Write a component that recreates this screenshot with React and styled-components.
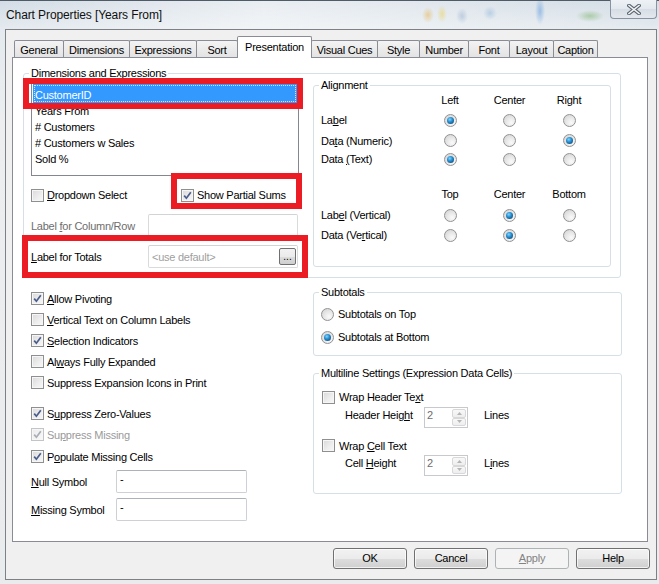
import React from 'react'
import styled, { createGlobalStyle } from 'styled-components'

const GlobalStyle = createGlobalStyle`
  html, body { margin: 0; padding: 0; }
  body {
    font-family: "Liberation Sans", Arial, sans-serif;
    font-size: 11px;
    letter-spacing: -0.25px;
    color: #000;
  }
  u { text-underline-offset: 1px; }
`

const tabs = [
  ['General', 50], ['Dimensions', 67], ['Expressions', 68], ['Sort', 42],
  ['Presentation', 75], ['Visual Cues', 67], ['Style', 43], ['Number', 50],
  ['Font', 42], ['Layout', 45], ['Caption', 45],
]

const listItems = ['CustomerID', 'Years From', '# Customers', '# Customers w Sales', 'Sold %']

function Check({ checked, disabled }) {
    return (
        <CheckBox $disabled={disabled}>
            {checked &&
                <svg width="11" height="11" viewBox="0 0 11 11">
                    <path d="M2.2 5.6 L4.4 8.2 L8.8 2.2" fill="none"
                        stroke={disabled ? '#a9adb5' : '#4b5d8c'} strokeWidth="1.7" />
                </svg>
            }
        </CheckBox>
    )
}

function Spinner() {
    return (
        <Spin>
            <SpinText>2</SpinText>
            <SpinButtons>
                <SpinBtn>
                    <svg width="5" height="3" viewBox="0 0 5 3"><path d="M0 3 L2.5 0 L5 3Z" fill="#b5b5b5" /></svg>
                </SpinBtn>
                <SpinBtn>
                    <svg width="5" height="3" viewBox="0 0 5 3"><path d="M0 0 L2.5 3 L5 0Z" fill="#b5b5b5" /></svg>
                </SpinBtn>
            </SpinButtons>
        </Spin>
    )
}

function App() {
    return (
        <>
            <GlobalStyle />
            <Window>
                <TitleBar>
                    <Title>Chart Properties [Years From]</Title>
                    <CloseButton>
                        <svg width="14" height="11" viewBox="0 0 14 11">
                            <path d="M2 1.5 L12 9.5 M12 1.5 L2 9.5" stroke="#5d6670" strokeWidth="3.6" strokeLinecap="square" />
                            <path d="M2 1.5 L12 9.5 M12 1.5 L2 9.5" stroke="#f4f6f8" strokeWidth="1.6" strokeLinecap="square" />
                        </svg>
                    </CloseButton>
                </TitleBar>

                <Client>
                    <TabStrip>
                        {tabs.map(([name, w], i) => (
                            <Tab key={name} $w={w} $first={i === 0} $active={name === 'Presentation'}>{name}</Tab>
                        ))}
                    </TabStrip>

                    <Panel>
                        <TopGroup>
                            <Legend>Dimensions and Expressions</Legend>
                            <TopLeft>
                                <ListBox>
                                    {listItems.map((item, i) => (
                                        <ListItem key={item} $selected={i === 0}>{item}</ListItem>
                                    ))}
                                </ListBox>
                                <CheckLine>
                                    <CheckItem $w={150}><Check /><span><u>D</u>ropdown Select</span></CheckItem>
                                    <CheckItem><Check checked /><span>Show Partial Sums</span></CheckItem>
                                </CheckLine>
                                <FieldRow $top={12}>
                                    <FieldLabel $w={117} $disabled>Label <u>f</u>or Column/Row</FieldLabel>
                                    <TextBox $w={150} $disabled />
                                </FieldRow>
                                <FieldRow $top={8}>
                                    <FieldLabel $w={117}><u>L</u>abel for Totals</FieldLabel>
                                    <TextBox $w={150} $disabled>
                                        <Placeholder>&lt;use default&gt;</Placeholder>
                                        <DotsButton>...</DotsButton>
                                    </TextBox>
                                </FieldRow>
                            </TopLeft>

                            <AlignGroup>
                                <Legend>Alignment</Legend>
                                <AlignGrid>
                                    <span />
                                    <ColHead>Left</ColHead>
                                    <ColHead>Center</ColHead>
                                    <ColHead>Right</ColHead>

                                    <RowHead>La<u>b</u>el</RowHead>
                                    <Cell><Radio $on /></Cell><Cell><Radio /></Cell><Cell><Radio /></Cell>
                                    <RowHead>Da<u>t</u>a (Numeric)</RowHead>
                                    <Cell><Radio /></Cell><Cell><Radio /></Cell><Cell><Radio $on /></Cell>
                                    <RowHead>Data <u>(</u>Text)</RowHead>
                                    <Cell><Radio $on /></Cell><Cell><Radio /></Cell><Cell><Radio /></Cell>

                                    <Spacer />

                                    <span />
                                    <ColHead>Top</ColHead>
                                    <ColHead>Center</ColHead>
                                    <ColHead>Bottom</ColHead>

                                    <RowHead>Lab<u>e</u>l (Vertical)</RowHead>
                                    <Cell><Radio /></Cell><Cell><Radio $on /></Cell><Cell><Radio /></Cell>
                                    <RowHead>Data (Ve<u>r</u>tical)</RowHead>
                                    <Cell><Radio /></Cell><Cell><Radio $on /></Cell><Cell><Radio /></Cell>
                                </AlignGrid>
                            </AlignGroup>
                        </TopGroup>

                        <Lower>
                            <OptionCol>
                                <OptionBlock $top={10}>
                                    <OptionRow><Check checked /><span><u>A</u>llow Pivoting</span></OptionRow>
                                    <OptionRow><Check /><span><u>V</u>ertical Text on Column Labels</span></OptionRow>
                                    <OptionRow><Check checked /><span><u>S</u>election Indicators</span></OptionRow>
                                    <OptionRow><Check /><span>Al<u>w</u>ays Fully Expanded</span></OptionRow>
                                    <OptionRow><Check /><span>Suppress Expansion Icons in Print</span></OptionRow>
                                </OptionBlock>
                                <OptionBlock $top={10}>
                                    <OptionRow><Check checked /><span>S<u>u</u>ppress Zero-Values</span></OptionRow>
                                    <OptionRow $disabled><Check checked disabled /><span>Su<u>p</u>press Missing</span></OptionRow>
                                    <OptionRow $top={1}><Check checked /><span>P<u>o</u>pulate Missing Cells</span></OptionRow>
                                </OptionBlock>
                                <FieldRow $top={3}>
                                    <FieldLabel $w={85}><u>N</u>ull Symbol</FieldLabel>
                                    <TextBox $w={131}><InputText>-</InputText></TextBox>
                                </FieldRow>
                                <FieldRow $top={5}>
                                    <FieldLabel $w={85}><u>M</u>issing Symbol</FieldLabel>
                                    <TextBox $w={131}><InputText>-</InputText></TextBox>
                                </FieldRow>
                            </OptionCol>

                            <SideCol>
                                <Group $h={64} $top={14}>
                                    <Legend>Subtotals</Legend>
                                    <GroupBody $pt={11} $pl={7}>
                                        <RadioRow><Radio /><span>Subtotals on Top</span></RadioRow>
                                        <RadioRow $top={3}><Radio $on /><span>Subtotals at Bottom</span></RadioRow>
                                    </GroupBody>
                                </Group>
                                <Group $h={121} $top={17}>
                                    <Legend>Multiline Settings (Expression Data Cells)</Legend>
                                    <GroupBody $pt={13} $pl={8}>
                                        <RadioRow><Check /><span>Wrap Header Te<u>x</u>t</span></RadioRow>
                                        <SpinRow>
                                            <SpinLabel>Header Heig<u>h</u>t</SpinLabel>
                                            <Spinner />
                                            <SpinUnit>Lines</SpinUnit>
                                        </SpinRow>
                                        <RadioRow $top={9} $h={19}><Check /><span>Wrap <u>C</u>ell Text</span></RadioRow>
                                        <SpinRow>
                                            <SpinLabel>Cell <u>H</u>eight</SpinLabel>
                                            <Spinner />
                                            <SpinUnit>L<u>i</u>nes</SpinUnit>
                                        </SpinRow>
                                    </GroupBody>
                                </Group>
                            </SideCol>
                        </Lower>
                    </Panel>

                    <ButtonBar>
                        <Button>OK</Button>
                        <Button>Cancel</Button>
                        <Button $disabled><u>A</u>pply</Button>
                        <Button>Help</Button>
                    </ButtonBar>
                </Client>

                <Marker $x={23} $y={78} $w={280} $h={31} />
                <Marker $x={171} $y={173} $w={131} $h={36} />
                <Marker $x={22} $y={235} $w={286} $h={43} />
            </Window>
        </>
    )
}

const Window = styled.div`
    position: relative;
    width: 659px;
    height: 584px;
    overflow: hidden;
    background: linear-gradient(180deg, #d3dce5 0px, #e4eaef 28px, #eceef0 120px, #e9ebed 100%);
`

const TitleBar = styled.div`
    height: 28px;
    border-top: 1px solid #4f5b67;
    display: flex;
    justify-content: space-between;
    align-items: flex-start;
    background:
        radial-gradient(ellipse 6px 8px at 428px 14px, rgba(230, 170, 60, 0.45), transparent),
        radial-gradient(ellipse 5px 9px at 442px 13px, rgba(235, 205, 70, 0.45), transparent),
        radial-gradient(ellipse 6px 8px at 462px 15px, rgba(120, 150, 190, 0.35), transparent),
        radial-gradient(ellipse 7px 7px at 490px 12px, rgba(110, 160, 210, 0.35), transparent),
        radial-gradient(ellipse 5px 14px at 540px 10px, rgba(70, 140, 220, 0.45), transparent),
        radial-gradient(ellipse 14px 6px at 590px 15px, rgba(110, 170, 90, 0.45), transparent),
        linear-gradient(90deg, rgba(255,255,255,0) 0%, rgba(255,255,255,0.5) 40%, rgba(255,255,255,0) 100%);
`

const Title = styled.div`
    padding: 7px 0 0 6px;
    font-size: 12px;
    line-height: 14px;
    letter-spacing: -0.1px;
    color: #111;
`

const CloseButton = styled.div`
    box-sizing: border-box;
    width: 47px;
    height: 19px;
    margin: -1px 2px 0 0;
    border: 1px solid #8793a0;
    border-top: none;
    border-radius: 0 0 4px 4px;
    background: linear-gradient(180deg, #eef2f6 0%, #e2e8ee 50%, #d6dde4 51%, #e3e8ee 100%);
    display: flex;
    align-items: center;
    justify-content: center;
`

const Client = styled.div`
    box-sizing: border-box;
    margin-left: 5px;
    width: 652px;
    height: 551px;
    border: 1px solid #7d8084;
    background: #f0f0f0;
`

const TabStrip = styled.div`
    position: relative;
    z-index: 2;
    display: flex;
    align-items: flex-end;
    height: 21px;
    margin-top: 6px;
    padding-left: 8px;
`

const Tab = styled.div`
    box-sizing: border-box;
    width: ${p => p.$w}px;
    height: ${p => (p.$active ? 22 : 17)}px;
    margin-left: ${p => (p.$first ? 0 : -1)}px;
    margin-bottom: ${p => (p.$active ? -1 : 0)}px;
    padding-top: ${p => (p.$active ? 3 : 2)}px;
    border: 1px solid #898c95;
    border-bottom: none;
    border-radius: 2px 2px 0 0;
    background: ${p => (p.$active ? '#fff' : 'linear-gradient(180deg, #f3f3f3 0%, #ebebeb 50%, #e3e3e3 100%)')};
    position: relative;
    z-index: ${p => (p.$active ? 2 : 1)};
    text-align: center;
    line-height: 14px;
    white-space: nowrap;
`

const Panel = styled.div`
    box-sizing: border-box;
    margin-left: 6px;
    width: 636px;
    height: 485px;
    border: 1px solid #898c95;
    background: #fff;
`

const Legend = styled.div`
    position: absolute;
    top: -8px;
    left: 5px;
    padding: 0 2px;
    background: #fff;
    line-height: 14px;
    white-space: nowrap;
`

const TopGroup = styled.div`
    position: relative;
    box-sizing: border-box;
    margin: 15px 0 0 10px;
    width: 598px;
    height: 205px;
    border: 1px solid #d5dfe5;
    border-radius: 3px;
    display: flex;
`

const TopLeft = styled.div`
    width: 289px;
    box-sizing: border-box;
    padding: 8px 0 0 7px;
`

const ListBox = styled.div`
    box-sizing: border-box;
    width: 268px;
    height: 94px;
    border: 1px solid #828790;
    padding: 1px 1px 0;
`

const ListItem = styled.div`
    box-sizing: border-box;
    height: ${p => (p.$selected ? 19 : 16)}px;
    padding: ${p => (p.$selected ? '3px 0 0 2px' : '0 0 0 2px')};
    line-height: 16px;
    white-space: nowrap;
    background: ${p => (p.$selected ? '#3399ff' : 'transparent')};
    color: ${p => (p.$selected ? '#fff' : '#000')};
    outline: ${p => (p.$selected ? '1px dotted #cfe6ff' : 'none')};
    outline-offset: -2px;
`

const CheckLine = styled.div`
    display: flex;
    align-items: center;
    margin-top: 12px;
    height: 14px;
`

const CheckItem = styled.div`
    display: flex;
    align-items: center;
    gap: 3px;
    width: ${p => (p.$w ? `${p.$w}px` : 'auto')};
    white-space: nowrap;
`

const CheckBox = styled.span`
    box-sizing: border-box;
    flex: none;
    width: 13px;
    height: 13px;
    border: 1px solid ${p => (p.$disabled ? '#c2c4c6' : '#8e8f8f')};
    background: ${p => (p.$disabled
        ? 'linear-gradient(135deg, #ececec, #f8f8f8)'
        : 'linear-gradient(135deg, #d9d9d9 0%, #eeeeee 60%, #f7f7f7 100%)')};
    box-shadow: inset 0 0 0 1px #f6f6f6;
    display: flex;
    align-items: center;
    justify-content: center;
`

const FieldRow = styled.div`
    display: flex;
    align-items: center;
    margin-top: ${p => p.$top || 0}px;
    height: 23px;
`

const FieldLabel = styled.div`
    width: ${p => p.$w}px;
    flex: none;
    white-space: nowrap;
    color: ${p => (p.$disabled ? '#6d6d6d' : '#000')};
`

const TextBox = styled.div`
    box-sizing: border-box;
    width: ${p => p.$w}px;
    height: 23px;
    border: 1px solid ${p => (p.$disabled ? '#d9dadc' : '#cdd0d4')};
    border-top-color: ${p => (p.$disabled ? '#d2d3d5' : '#adb2b8')};
    border-radius: 2px;
    background: #fff;
    display: flex;
    align-items: center;
    justify-content: space-between;
    padding: 0 1px 0 3px;
`

const InputText = styled.span`
    margin-top: -6px;
`

const Placeholder = styled.span`
    color: #a0a0a0;
`

const DotsButton = styled.div`
    box-sizing: border-box;
    width: 17px;
    height: 17px;
    border: 1px solid #707070;
    border-radius: 2px;
    background: linear-gradient(180deg, #f2f2f2 0%, #ebebeb 50%, #dddddd 51%, #cfcfcf 100%);
    font-size: 10px;
    line-height: 16px;
    text-align: center;
    letter-spacing: 0;
`

const AlignGroup = styled.div`
    position: relative;
    box-sizing: border-box;
    margin-top: 11px;
    width: 298px;
    height: 182px;
    border: 1px solid #d5dfe5;
    border-radius: 3px;
`

const AlignGrid = styled.div`
    display: grid;
    grid-template-columns: 99px 60px 59px 60px;
    grid-template-rows: 19px 22px 19px 18px 16px 20px 22px 18px;
    padding: 4px 0 0 7px;
    align-items: center;
`

const Spacer = styled.div`
    grid-column: 1 / -1;
`

const ColHead = styled.div`
    text-align: center;
`

const RowHead = styled.div`
    white-space: nowrap;
`

const Cell = styled.div`
    display: flex;
    justify-content: center;
    align-items: center;
`

const Radio = styled.span`
    box-sizing: border-box;
    flex: none;
    position: relative;
    width: 13px;
    height: 13px;
    border-radius: 50%;
    border: 1px solid #929292;
    background: radial-gradient(circle at 65% 70%, #fafafa 0%, #e8e8e8 45%, #cfcfcf 100%);
    &::after {
        content: '';
        display: ${p => (p.$on ? 'block' : 'none')};
        position: absolute;
        left: 2px;
        top: 2px;
        width: 7px;
        height: 7px;
        border-radius: 50%;
        background: radial-gradient(circle at 40% 35%, #7fd6ff 0%, #2a8fd0 40%, #135a8e 75%, #0d3556 100%);
    }
`

const Lower = styled.div`
    display: flex;
`

const OptionCol = styled.div`
    width: 300px;
    box-sizing: border-box;
    padding-left: 18px;
`

const OptionBlock = styled.div`
    margin-top: ${p => p.$top}px;
`

const OptionRow = styled.div`
    display: flex;
    align-items: center;
    gap: 3px;
    height: 21px;
    margin-top: ${p => p.$top || 0}px;
    white-space: nowrap;
    color: ${p => (p.$disabled ? '#9a9a9a' : '#000')};
`

const SideCol = styled.div`
    display: flex;
    flex-direction: column;
`

const Group = styled.div`
    position: relative;
    box-sizing: border-box;
    margin-top: ${p => p.$top}px;
    width: 309px;
    height: ${p => p.$h}px;
    border: 1px solid #d5dfe5;
    border-radius: 3px;
`

const GroupBody = styled.div`
    padding: ${p => p.$pt}px 0 0 ${p => p.$pl}px;
`

const RadioRow = styled.div`
    display: flex;
    align-items: center;
    gap: 4px;
    height: ${p => p.$h || 20}px;
    margin-top: ${p => p.$top || 0}px;
    white-space: nowrap;
`

const SpinRow = styled.div`
    display: flex;
    align-items: flex-start;
    height: 20px;
    padding-left: 23px;
`

const SpinLabel = styled.div`
    width: 79px;
    padding-top: 1px;
    line-height: 14px;
    white-space: nowrap;
`

const SpinUnit = styled.span`
    margin-left: 16px;
    padding-top: 1px;
    line-height: 14px;
`

const Spin = styled.div`
    box-sizing: border-box;
    width: 44px;
    height: 21px;
    border: 1px solid #c7c9cc;
    display: flex;
    color: #6d6d6d;
`

const SpinText = styled.div`
    flex: 1;
    padding-left: 2px;
    line-height: 15px;
`

const SpinButtons = styled.div`
    display: flex;
    flex-direction: column;
    width: 14px;
    padding: 1px 1px 1px 0;
`

const SpinBtn = styled.div`
    box-sizing: border-box;
    flex: 1;
    border: 1px solid #d8d8d8;
    border-radius: 2px;
    background: linear-gradient(180deg, #f8f8f8, #eeeeee);
    display: flex;
    align-items: center;
    justify-content: center;
`

const ButtonBar = styled.div`
    display: flex;
    justify-content: flex-end;
    gap: 7px;
    margin-top: 6px;
    padding-right: 6px;
`

const Button = styled.div`
    box-sizing: border-box;
    width: 74px;
    height: 21px;
    border: 1px solid ${p => (p.$disabled ? '#adb2b5' : '#707070')};
    border-radius: 3px;
    background: ${p => (p.$disabled
        ? '#f4f4f4'
        : 'linear-gradient(180deg, #f2f2f2 0%, #ebebeb 50%, #dddddd 51%, #cfcfcf 100%)')};
    box-shadow: inset 0 0 0 1px ${p => (p.$disabled ? '#f4f4f4' : 'rgba(255,255,255,0.7)')};
    color: ${p => (p.$disabled ? '#838383' : '#000')};
    text-align: center;
    line-height: 19px;
`

const Marker = styled.div`
    position: absolute;
    box-sizing: border-box;
    left: ${p => p.$x}px;
    top: ${p => p.$y}px;
    width: ${p => p.$w}px;
    height: ${p => p.$h}px;
    border: 6px solid #ec1c24;
    pointer-events: none;
`

export default App
